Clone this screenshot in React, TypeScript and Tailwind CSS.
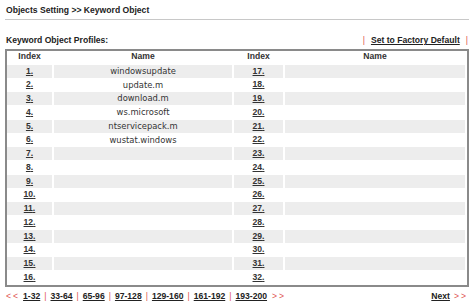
import React from "react";

const names = ["windowsupdate", "update.m", "download.m", "ws.microsoft", "ntservicepack.m", "wustat.windows"];

const pages = ["1-32", "33-64", "65-96", "97-128", "129-160", "161-192", "193-200"];

export default function App() {
  const rows = Array.from({ length: 16 }, (_, i) => i);
  return (
    <div className="w-[474px] h-[303px] bg-white text-[#333] px-[5px] overflow-hidden" style={{ fontFamily: '"Liberation Sans", Arial, sans-serif' }}>
      <div className="h-[20px] flex items-center pl-[1px] pt-[1px] border-b border-[#c8c8c8] text-[8.6px] font-bold text-[#222]">
        Objects Setting &gt;&gt; Keyword Object
      </div>
      <div className="h-[29px] flex items-end justify-between pb-[2px] text-[8.6px] font-bold">
        <span className="pl-[1px] text-[#222]">Keyword Object Profiles:</span>
        <span className="flex items-center gap-[6px] pr-[1px]">
          <span className="text-[#e0524f] font-normal">|</span>
          <span className="underline text-[#222]">Set to Factory Default</span>
          <span className="text-[#e0524f] font-normal">|</span>
        </span>
      </div>
      <div className="border-2 border-[#8a8a8a] pt-[0px] pb-[1px] pl-0 pr-[1px]">
        <div className="grid grid-cols-[45px_178px_49px_180px] gap-x-[2px] gap-y-[1px] auto-rows-[12.75px] text-[8.6px]">
          <div className="font-bold flex items-center justify-center h-[11px]">Index</div>
          <div className="font-bold flex items-center justify-center h-[11px]">Name</div>
          <div className="font-bold flex items-center justify-center h-[11px]">Index</div>
          <div className="font-bold flex items-center justify-center h-[11px]">Name</div>
          {rows.map((i) => {
            const bg = i % 2 === 0 ? "bg-[#ededed]" : "bg-white";
            return (
              <React.Fragment key={i}>
                <div className={`${bg} flex items-center justify-center font-bold underline`}>{i + 1}.</div>
                <div className={`${bg} flex items-center justify-center text-[8.4px]`} style={{ fontFamily: '"DejaVu Sans", Verdana, sans-serif' }}>
                  {names[i] ?? ""}
                </div>
                <div className={`${bg} flex items-center justify-center font-bold underline`}>{i + 17}.</div>
                <div className={`${bg}`}></div>
              </React.Fragment>
            );
          })}
        </div>
      </div>
      <div className="h-[19px] flex items-center justify-between text-[8.6px] font-bold pl-[1px] pr-[1px]">
        <div className="flex items-center">
          <span className="text-[#e0524f] font-normal tracking-[2px] mr-[3px]">&lt;&lt;</span>
          {pages.map((p, idx) => (
            <React.Fragment key={p}>
              <span className="underline text-[#222]">{p}</span>
              {idx < pages.length - 1 && <span className="text-[#e0524f] font-normal mx-[4px]">|</span>}
            </React.Fragment>
          ))}
          <span className="text-[#e0524f] font-normal tracking-[2px] ml-[5px]">&gt;&gt;</span>
        </div>
        <div className="flex items-center">
          <span className="underline text-[#222]">Next</span>
          <span className="text-[#e0524f] font-normal tracking-[2px] ml-[4px]">&gt;&gt;</span>
        </div>
      </div>
    </div>
  );
}
